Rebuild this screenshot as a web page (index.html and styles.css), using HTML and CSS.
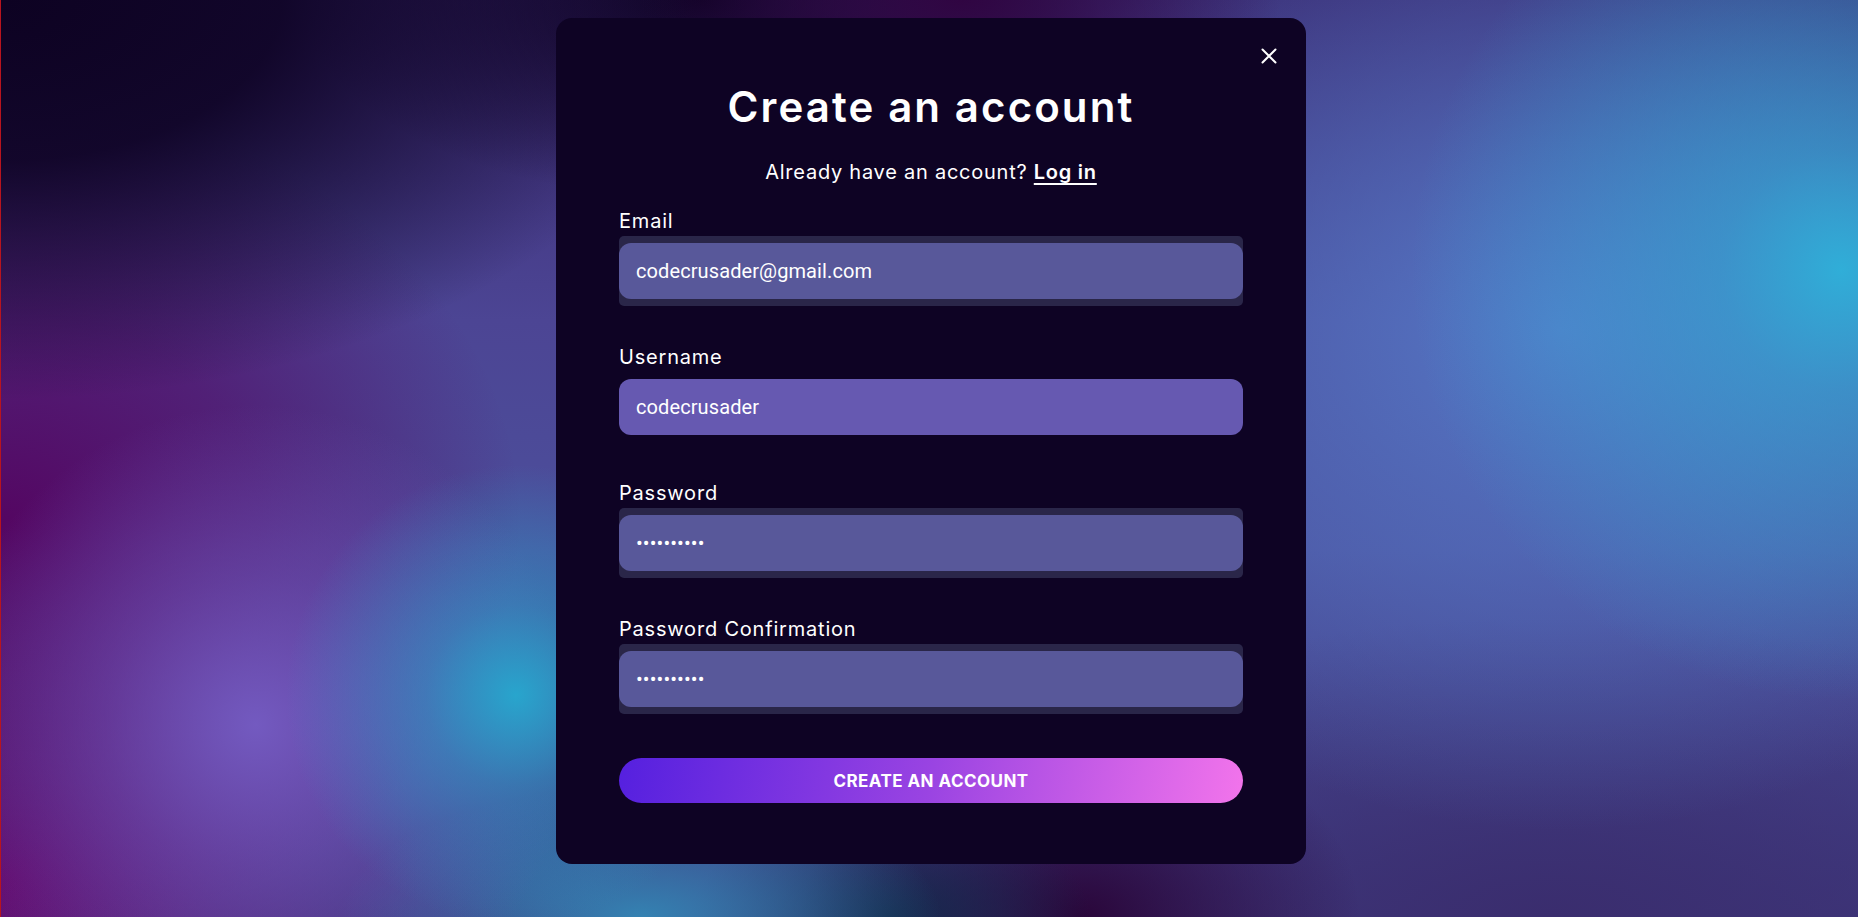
FILE: index.html
```html
<!DOCTYPE html>
<html lang="en">
<head>
<meta charset="utf-8">
<title>Create an account</title>
<link rel="stylesheet" href="styles.css">
</head>
<body>
<div class="page">
  <div class="modal">
    <button class="close" type="button" aria-label="Close">
      <svg viewBox="0 0 16 16" width="16" height="16"><path d="M1.5 1.5 L14.5 14.5 M14.5 1.5 L1.5 14.5" stroke="#fff" stroke-width="2" stroke-linecap="round" fill="none"/></svg>
    </button>
    <h1 class="title">Create an account</h1>
    <p class="subtitle">Already have an account? <a href="#" class="link">Log in</a></p>
    <form class="form">
      <div class="field">
        <label class="label">Email</label>
        <div class="box"><input class="input" type="email" value="codecrusader@gmail.com"></div>
      </div>
      <div class="field">
        <label class="label">Username</label>
        <input class="input input-alt" type="text" value="codecrusader">
      </div>
      <div class="field">
        <label class="label">Password</label>
        <div class="box"><input class="input" type="password" value="abcdefghij"></div>
      </div>
      <div class="field">
        <label class="label">Password Confirmation</label>
        <div class="box"><input class="input" type="password" value="abcdefghij"></div>
      </div>
      <button class="submit" type="button">CREATE AN ACCOUNT</button>
    </form>
  </div>
</div>
</body>
</html>
```

FILE: styles.css
```css
html, body {
  margin: 0;
  padding: 0;
  height: 100%;
}
body {
  font-family: Inter, "Open Sans", sans-serif;
  color: #fff;
  overflow: hidden;
}
.page {
  box-sizing: border-box;
  height: 917px;
  display: flex;
  justify-content: center;
  align-items: flex-start;
  padding-top: 18px;
  padding-left: 3px;
  border-left: 1px solid #b8141e;
  background:
    radial-gradient(circle at 1840px 270px, rgba(48,174,216,1) 0, rgba(48,174,216,0.6) 120px, rgba(48,174,216,0) 430px),
    radial-gradient(circle at 515px 695px, rgba(40,165,205,1) 0, rgba(40,165,205,0.5) 90px, rgba(40,165,205,0) 230px),
    radial-gradient(circle at 255px 725px, rgba(115,90,192,1) 0, rgba(115,90,192,0.5) 150px, rgba(115,90,192,0) 320px),
    radial-gradient(ellipse 300px 130px at 640px 917px, rgba(52,130,178,1) 0, rgba(52,130,178,0) 100%),
    radial-gradient(ellipse 200px 110px at 890px 917px, rgba(19,40,74,1) 0, rgba(19,40,74,0) 100%),
    radial-gradient(ellipse 280px 200px at 1080px 917px, rgba(42,6,58,1) 0, rgba(42,6,58,0) 100%),
    radial-gradient(ellipse 320px 140px at 960px 0px, rgba(48,5,66,1) 0, rgba(48,5,66,0) 100%),
    radial-gradient(ellipse 700px 400px at 0px 0px, rgba(13,2,34,1) 0, rgba(13,2,34,0.9) 40%, rgba(13,2,34,0) 100%),
    radial-gradient(ellipse 400px 200px at 700px 0px, rgba(16,3,38,1) 0, rgba(16,3,38,0) 100%),
    radial-gradient(ellipse 520px 420px at 0px 520px, rgba(84,6,98,1) 0, rgba(84,6,98,0.6) 50%, rgba(84,6,98,0) 100%),
    radial-gradient(ellipse 420px 360px at 0px 880px, rgba(102,14,114,1) 0, rgba(102,14,114,0) 100%),
    radial-gradient(ellipse 600px 500px at 1560px 330px, rgba(84,120,198,1) 0, rgba(84,120,198,0) 100%),
    radial-gradient(ellipse 700px 300px at 1550px 917px, rgba(58,45,110,1) 0, rgba(58,45,110,0) 100%),
    linear-gradient(180deg, #3a2a72 0%, #4c4594 35%, #4c4f9c 60%, #3f3a80 100%);
}
.modal {
  position: relative;
  box-sizing: border-box;
  width: 750px;
  padding: 59px 63px 61px;
  background: #0e0324;
  border-radius: 16px;
}
.close {
  position: absolute;
  top: 30px;
  right: 29px;
  width: 16px;
  height: 16px;
  padding: 0;
  border: 0;
  background: none;
  cursor: pointer;
  display: block;
}
.close svg {
  display: block;
}
.title {
  margin: 0;
  font-size: 42px;
  line-height: 60px;
  font-weight: 600;
  text-align: center;
  letter-spacing: 2.1px;
}
.subtitle {
  margin: 22px 0 0;
  font-size: 20px;
  line-height: 27px;
  text-align: center;
  font-weight: 400;
  letter-spacing: 0.75px;
}
.link {
  color: #fff;
  font-weight: 600;
  text-decoration: underline;
  text-decoration-thickness: 2px;
  text-underline-offset: 4px;
}
.form {
  margin-top: 22px;
  display: flex;
  flex-direction: column;
  gap: 45px;
}
.field {
  display: flex;
  flex-direction: column;
}
.label {
  font-size: 20px;
  line-height: 27px;
  margin-bottom: 8px;
  letter-spacing: 0.8px;
}
.box {
  background: #2a2649;
  border-radius: 5px;
  padding: 7px 0;
  margin: -7px 0;
}
.input {
  display: block;
  box-sizing: border-box;
  width: 100%;
  height: 56px;
  padding: 0 17px;
  border: 0;
  border-radius: 12px;
  background: #58589a;
  color: #fff;
  font-family: Roboto, sans-serif;
  font-size: 20px;
  letter-spacing: 0.1px;
  outline: none;
}
.input-alt {
  background: #6659b1;
}
.submit {
  margin-top: 6px;
  height: 45px;
  border: 0;
  border-radius: 23px;
  background: linear-gradient(100deg, #5520df 0%, #9a44e2 50%, #f274eb 100%);
  color: #fff;
  font-family: Inter, sans-serif;
  font-weight: 700;
  font-size: 17px;
  letter-spacing: 0.45px;
  cursor: pointer;
}
```
